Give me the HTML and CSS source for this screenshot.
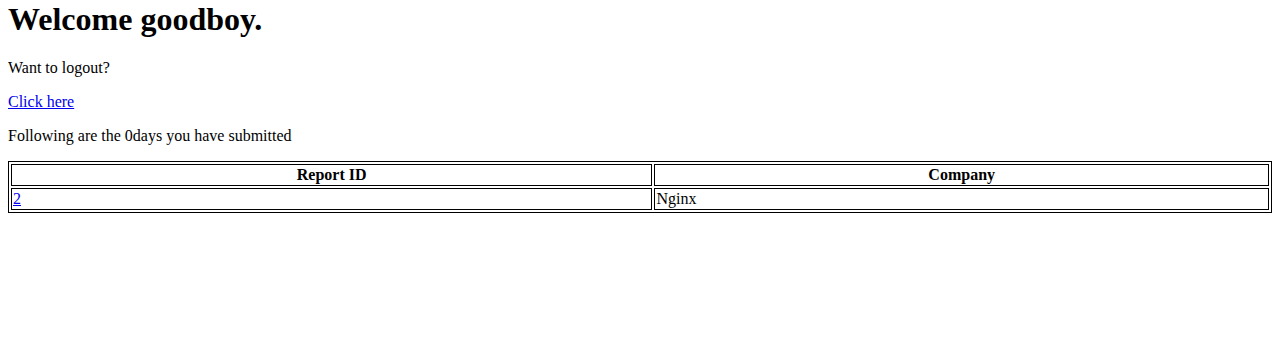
FILE: index.html
```html
<!DOCTYPE html>
<html lang="en">
<head>
  <meta charset="UTF-8" />
  <title>Welcome</title>
  <link rel="stylesheet" href="styles.css">
</head>
<body>
  <h1>Welcome goodboy.</h1>
  <p>Want to logout?</p>
  <p><a href="#">Click here</a></p>
  <p>Following are the 0days you have submitted</p>
  <table class="reports">
    <tr>
      <th>Report ID</th>
      <th>Company</th>
    </tr>
    <tr>
      <td><a href="#">2</a></td>
      <td>Nginx</td>
    </tr>
  </table>
</body>
</html>
```

FILE: styles.css
```css
body {
  margin: 0 8px;
  padding-top: 1px;
  font-family: "Liberation Serif", "Times New Roman", serif;
  font-size: 16px;
  color: black;
  background: white;
}

h1 {
  font-size: 32px;
  margin: 0 0 21px;
}

p {
  margin: 16px 0;
}

a {
  color: #0000ee;
}

.reports {
  width: 100%;
  border: 1px solid black;
  border-spacing: 2px;
}

.reports th,
.reports td {
  border: 1px solid black;
  padding: 1px;
}

.reports td {
  text-align: left;
}
```
